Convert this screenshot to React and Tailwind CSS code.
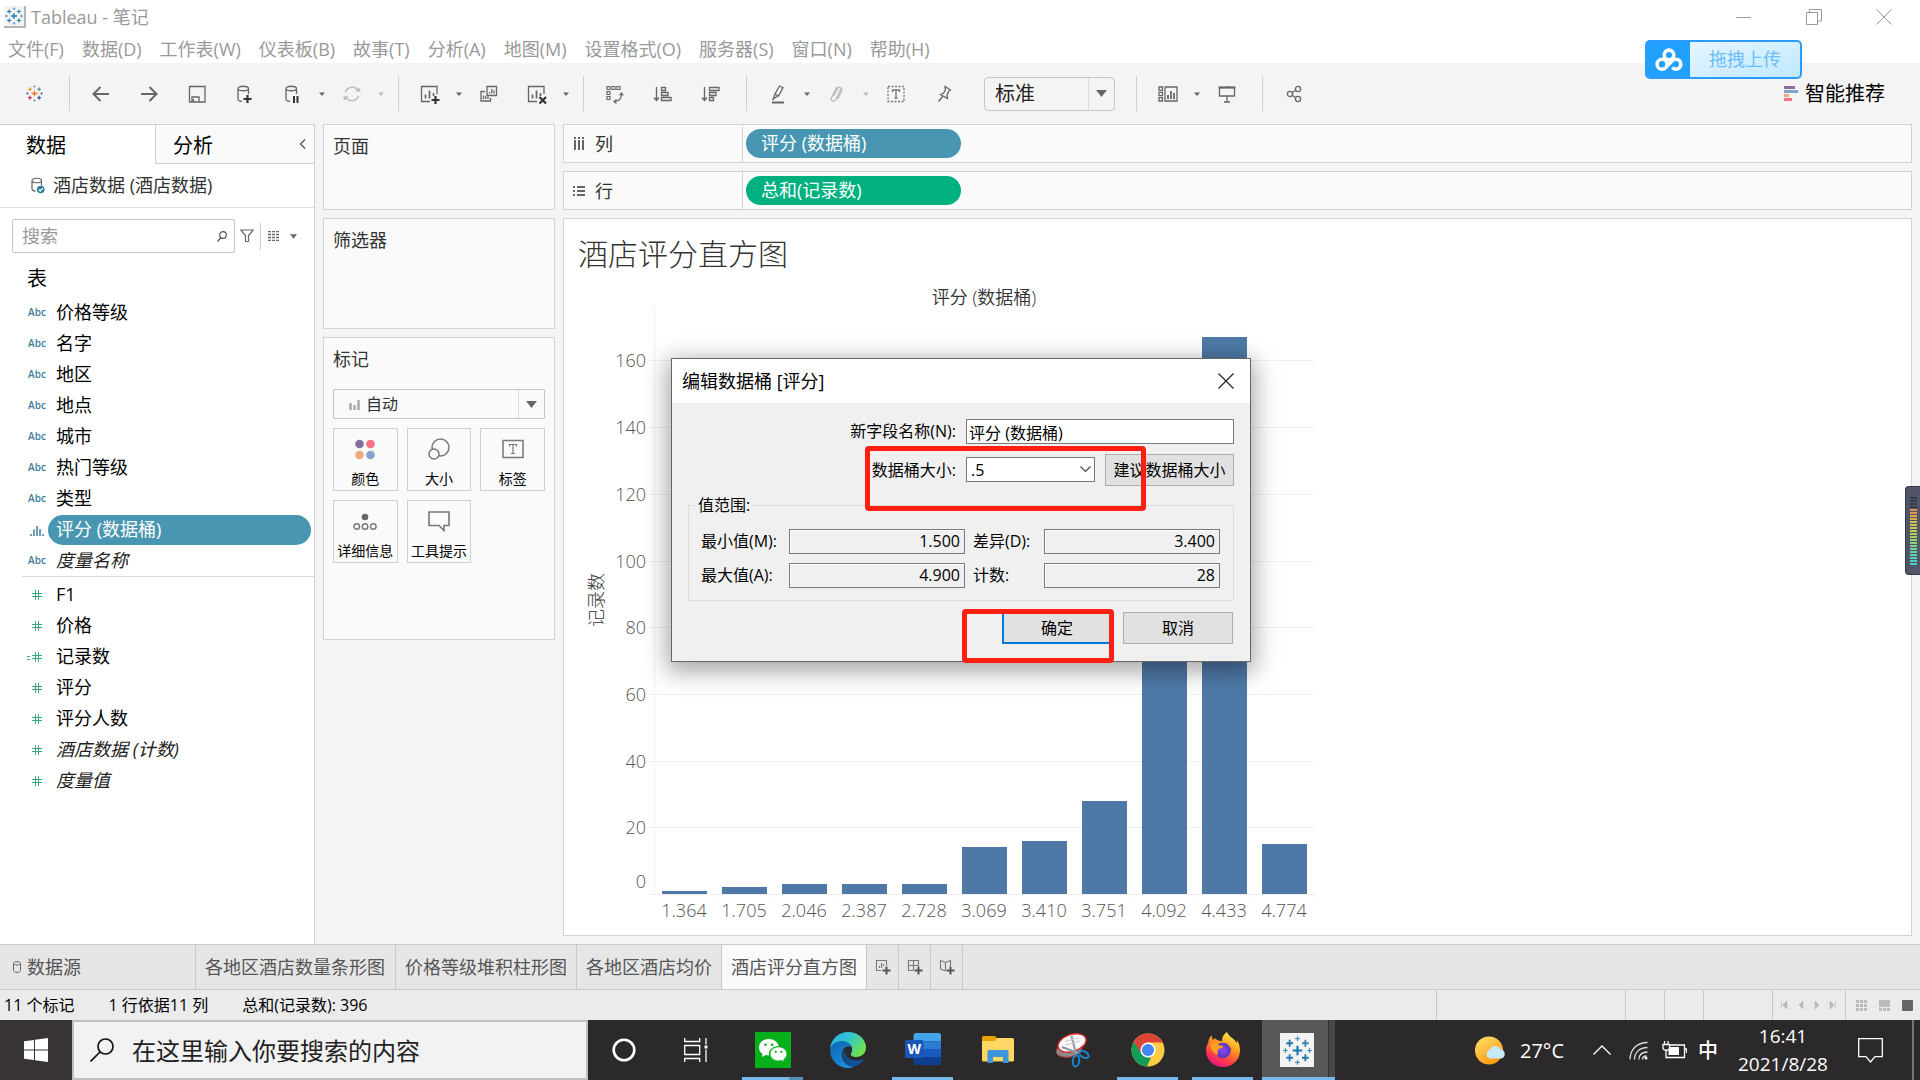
import React from "react";

const Plus = ({ x, y, r, c, w }) => (
  <path d={`M${x - r} ${y}H${x + r}M${x} ${y - r}V${y + r}`} stroke={c} strokeWidth={w} />
);

const BRAND = ["#e8762c", "#eb9129", "#5b879b", "#c72037", "#1f457e", "#7199a6", "#5c6692"];
const BLUE = ["#1f77b0", "#1f77b0", "#3d86b5", "#1f77b0", "#1f77b0", "#4c8fbb", "#4c8fbb"];

function TableauMark({ size = 18, c = BRAND }) {
  return (
    <svg width={size} height={size} viewBox="0 0 24 24" fill="none">
      <Plus x={12} y={12} r={4} c={c[0]} w={1.8} />
      <Plus x={5.5} y={6} r={2.8} c={c[1]} w={1.5} />
      <Plus x={18.5} y={6} r={2.8} c={c[2]} w={1.5} />
      <Plus x={5.5} y={18} r={2.8} c={c[3]} w={1.5} />
      <Plus x={18.5} y={18} r={2.8} c={c[4]} w={1.5} />
      <Plus x={12} y={2.2} r={2} c={c[5]} w={1} />
      <Plus x={12} y={21.8} r={2} c={c[5]} w={1} />
      <Plus x={2} y={12} r={2} c={c[6]} w={1} />
      <Plus x={22} y={12} r={2} c={c[6]} w={1} />
    </svg>
  );
}

const Ico = ({ children, c = "#666", w = 1.3 }) => (
  <svg width="20" height="20" viewBox="0 0 20 20" fill="none" stroke={c} strokeWidth={w}>
    {children}
  </svg>
);

const Tool = ({ label, children }) => (
  <button type="button" aria-label={label} className="mx-[14px] flex h-8 w-5 shrink-0 items-center justify-center">
    {children}
  </button>
);

const Caret = ({ label, c = "#666" }) => (
  <button type="button" aria-label={label} className="mr-0.5 flex h-8 w-[9px] shrink-0 items-center justify-center">
    <svg width="6" height="4" viewBox="0 0 6 4"><path d="M0 .5h6L3 4z" fill={c} /></svg>
  </button>
);

const Sep = () => <div className="mr-[7px] ml-[11px] h-[35px] w-px shrink-0 bg-[#cfcfcf]" />;

const DownTriangle = ({ w = 11 }) => (
  <svg width={w} height="7" viewBox="0 0 11 7"><path d="M0 0h11L5.500 7z" fill="#666" /></svg>
);

const MENU = ["文件(F)", "数据(D)", "工作表(W)", "仪表板(B)", "故事(T)", "分析(A)", "地图(M)", "设置格式(O)", "服务器(S)", "窗口(N)", "帮助(H)"];

function TitleBar() {
  return (
    <header className="bg-white text-[18px] text-[#999]">
      <div className="flex h-[34px] items-center">
        <div className="ml-1 flex h-[22px] w-[22px] items-center justify-center border-r-2 border-b-2 border-[#b5b5b5] bg-[#f3f3f3]">
          <TableauMark size={18} c={BLUE} />
        </div>
        <span className="ml-[5px] leading-[26px]">Tableau - 笔记</span>
        <div className="mr-px ml-auto flex">
          <button type="button" aria-label="最小化" className="flex h-[34px] w-[70px] items-center justify-center">
            <svg width="16" height="16"><path d="M0 8.500h15" stroke="#999" /></svg>
          </button>
          <button type="button" aria-label="还原" className="flex h-[34px] w-[70px] items-center justify-center">
            <svg width="16" height="16" fill="none" stroke="#999"><path d="M.5 3.500h11v12H.5zM3.500 3V.5h12v11.500H12" /></svg>
          </button>
          <button type="button" aria-label="关闭" className="flex h-[34px] w-[70px] items-center justify-center">
            <svg width="16" height="16" stroke="#999"><path d="M.5.5l15 15M15.500.5l-15 15" /></svg>
          </button>
        </div>
      </div>
      <nav className="flex h-[29px] items-center gap-[18px] pl-2">
        {MENU.map((m) => (
          <button type="button" key={m} className="leading-[28px] whitespace-nowrap">{m}</button>
        ))}
      </nav>
    </header>
  );
}

const cylinder = "M3 4.500c0-3 10.500-3 10.500 0s-10.500 3-10.500 0v10.500c0 1.500 1.500 2.200 4 2.400M13.500 4.500v5.500";

function Toolbar() {
  return (
    <div className="relative flex h-[61px] items-center pl-[10px]">
      <Tool label="Tableau 起始页"><TableauMark size={17} /></Tool>
      <Sep />
      <Tool label="撤消"><Ico w={2}><path d="M18 10H3M9.500 3L2.500 10l7 7" /></Ico></Tool>
      <Tool label="恢复"><Ico w={2}><path d="M2 10h15M10.500 3l7 7-7 7" /></Ico></Tool>
      <Tool label="保存"><Ico><path d="M2.500 2.500h15.500v15.500h-15.500zM5 18v-5h7v5M6.500 15v3" /></Ico></Tool>
      <Tool label="新建数据源"><Ico><path d={cylinder} /><path d="M12.500 11v8M8.500 15h8" stroke="#333" strokeWidth="2.200" /></Ico></Tool>
      <Tool label="暂停自动更新"><Ico><path d={cylinder} /><path d="M11 12v7M14.500 12v7" stroke="#333" strokeWidth="2" /></Ico></Tool>
      <Caret label="暂停选项" />
      <Tool label="刷新">
        <Ico c="#bbb" w={1.5}>
          <path d="M3.500 8a7 7 0 0 1 13-.5M16.500 12a7 7 0 0 1-13 .5" />
          <path d="M13.500 7.500h5.500l-2-4zM1 12.500h5.500l-4 4z" fill="#bbb" stroke="none" />
        </Ico>
      </Tool>
      <Caret label="刷新选项" c="#bbb" />
      <Sep />
      <Tool label="新建工作表">
        <Ico><path d="M10 17.500H1.500v-15h15.500V10" /><path d="M5.500 14.500v-4M9.500 14.500v-8M13.500 12V9" strokeWidth="1.700" /><path d="M15.500 12v8M11.500 16h8" stroke="#333" strokeWidth="2.200" /></Ico>
      </Tool>
      <Caret label="新建选项" />
      <Tool label="复制">
        <Ico><path d="M8 2.500h9.500v9H8zM6 7.500H2v9.500h9.500v-3" /><path d="M10.500 9.500V8M12.800 9.500V5M15 9.500V6.500M4.500 15v-3.500M6.800 15v-3M9 15v-2.500" /></Ico>
      </Tool>
      <Tool label="清除工作表">
        <Ico><path d="M10 17.500H1.500v-15h15.500V10" /><path d="M5.500 14.500v-4M9.500 14.500v-8M13.500 12V9" strokeWidth="1.700" /><path d="M12.500 13l6.500 6.500M19 13l-6.500 6.500" stroke="#333" strokeWidth="2.200" /></Ico>
      </Tool>
      <Caret label="清除选项" />
      <Sep />
      <Tool label="交换行和列">
        <Ico w={1.2}><path d="M2 2.500h3v3H2zM7 2.500h3v3H7zM12 2.500h3v3h-3zM2 7.500h3v3H2zM2 12.500h3v3H2z" /><path d="M16.500 10c0 4-2 7-7 7.500M14.500 11.500l2-2.500 2 2.500M11.500 15.500L9 17.500l2.500 2" /></Ico>
      </Tool>
      <Tool label="升序排序">
        <Ico><path d="M3.500 3v13M1 13.500l2.500 3 2.500-3M8.500 3.500h4v3h-4zM8.500 8.500h6.500v3h-6.500zM8.500 13.500h9.500v3h-9.500z" /></Ico>
      </Tool>
      <Tool label="降序排序">
        <Ico><path d="M3.500 3v13M1 13.500l2.500 3 2.500-3M8.500 3.500h9.500v3h-9.500zM8.500 8.500h6.500v3h-6.500zM8.500 13.500h4v3h-4z" /></Ico>
      </Tool>
      <Sep />
      <Tool label="突出显示">
        <Ico><path d="M11.500 2l3.500 1.500-4.500 8.500-3.500-2zM7 10l-1.500 4.500L10.500 12M6 14l-1.500 2" /><path d="M4 18.500h12" strokeWidth="2" /></Ico>
      </Tool>
      <Caret label="突出显示选项" />
      <Tool label="组成员">
        <Ico c="#bbb"><path d="M6.500 12l4-7.500c1-2 4-1 3.200 1.200l-5 9.800c-1.500 3-5.500 1.500-4.200-1.700l4.500-9c1.500-3 7-1.500 5.500 2.500l-4 8" /></Ico>
      </Tool>
      <Caret label="组选项" c="#bbb" />
      <Tool label="显示标记标签">
        <Ico c="#777"><path d="M2 2.500h16v15H2z" strokeDasharray="2 1.500" /><path d="M6.500 8V6h7v2M10 6v8M8.500 14h3" /></Ico>
      </Tool>
      <Tool label="固定轴">
        <Ico><path d="M11 2.500l5.500 3.500-2 1.500-1.500 4 .5 3-7-4 3-1.200 2-3.800zM8.500 12.500l-4 5" /></Ico>
      </Tool>
      <div className="relative ml-4 flex h-[34px] w-[131px] shrink-0 items-center rounded-sm border border-[#c8c8c8]">
        <select aria-label="适合" className="h-full w-full appearance-none bg-transparent pl-[10px] text-[20px] text-[#222]" defaultValue="标准">
          <option>标准</option>
        </select>
        <span className="pointer-events-none absolute inset-y-0 right-0 flex w-[26px] items-center justify-center border-l border-[#ddd]"><DownTriangle /></span>
      </div>
      <div className="w-[10px] shrink-0" />
      <Sep />
      <Tool label="显示/隐藏卡">
        <Ico><path d="M1 3h3.500v3.300H1zM1 8.300h3.500v3.300H1zM1 13.700h3.500v3.300H1zM7 3h12v14H7z" /><path d="M10 15v-4M13 15V7M16 15V9" strokeWidth="1.800" /></Ico>
      </Tool>
      <Caret label="卡选项" />
      <Tool label="演示模式">
        <Ico><path d="M2.500 3.500h15v8.500h-15z" /><path d="M1.500 3.500h17" strokeWidth="2" /><path d="M10 2v2M10 12v6M7 18h6" /></Ico>
      </Tool>
      <Sep />
      <Tool label="共享">
        <Ico><circle cx="6" cy="10" r="2.600" /><circle cx="14" cy="5" r="2.600" /><circle cx="14" cy="15" r="2.600" /><path d="M8.200 8.700l3.600-2.400M8.200 11.300l3.600 2.400" /></Ico>
      </Tool>
      <button type="button" className="mr-[35px] ml-auto flex items-center gap-[7px] text-[20px] leading-[28px] text-black">
        <svg width="14" height="16">
          <path fill="#8b6f9b" d="M0 0h11v3H0z" /><path fill="#84a4cd" d="M0 4h14v3H0z" /><path fill="#f3a77e" d="M0 8h5v3H0z" /><path fill="#fb6f83" d="M0 12h8v3H0z" />
        </svg>
        智能推荐
      </button>
    </div>
  );
}

const Abc = () => <span className="text-[10px] font-semibold text-[#3a7e9c]">Abc</span>;
const Hash = () => (
  <svg width="10" height="10" stroke="#3aa67c"><path d="M3.500 0v10M6.500 0v10M0 3.500h10M0 6.500h10" /></svg>
);
const CalcHash = () => (
  <svg width="16" height="10" className="-ml-1.5" stroke="#3aa67c"><path d="M9.500 0v10M12.500 0v10M6 3.500h10M6 6.500h10M1 4.500h3M1 7.500h3" /></svg>
);
const Bins = () => (
  <svg width="14" height="12" stroke="#3a7e9c" strokeWidth="1.500"><path d="M1 12v-2M4 12V5.500M7 12V2M10 12V5M13 12v-2" /></svg>
);

function Field({ icon, text, italic }) {
  return (
    <li className="flex h-[31px] items-center">
      <span className="ml-[26px] flex w-[22px] shrink-0 justify-center">{icon}</span>
      <button type="button" className={italic ? "pl-2 text-[#222] italic" : "pl-2"}>{text}</button>
    </li>
  );
}

function DataPane() {
  return (
    <aside className="flex w-[315px] shrink-0 flex-col border-t border-r border-[#cfcfcf] bg-white text-[18px] text-black">
      <div className="flex h-[39px] text-[20px]">
        <button type="button" className="w-[155px] shrink-0 pt-0.5 pl-[26px] text-left">数据</button>
        <div className="flex flex-1 items-center justify-between border-b border-l border-[#cfcfcf] bg-[#fafafa] pr-2">
          <button type="button" className="pt-0.5 pl-[17px]">分析</button>
          <button type="button" aria-label="折叠">
            <svg width="7" height="10" fill="none" stroke="#555" strokeWidth="1.300"><path d="M6 .5L1.500 5 6 9.500" /></svg>
          </button>
        </div>
      </div>
      <button type="button" className="flex h-[44px] items-center gap-2 border-b border-[#e0e0e0] pl-[31px] text-[#333]">
        <svg width="14" height="17" viewBox="0 0 14 17" fill="none" stroke="#666" strokeWidth="1.200">
          <path d="M1 3.500c0-3 9.500-3 9.500 0s-9.500 3-9.500 0V12c0 1.500 1.500 2 3.500 2.200M10.500 3.500v5" />
          <circle cx="9.700" cy="12.500" r="3.800" fill="#2f7d9b" stroke="none" /><path d="M7.900 12.500l1.400 1.500 2.400-2.800" stroke="#fff" />
        </svg>
        <span>酒店数据 (酒店数据)</span>
      </button>
      <div className="mt-[11px] flex h-[34px] items-center pl-3">
        <label className="flex h-full w-[223px] shrink-0 items-center rounded-xs border border-[#c4c4c4] pr-[7px] pl-[9px]">
          <input aria-label="搜索" placeholder="搜索" className="min-w-0 flex-1 text-[18px] placeholder-[#999] outline-none" />
          <svg width="10" height="11" fill="none" stroke="#555" strokeWidth="1.200"><circle cx="6" cy="4" r="3.300" /><path d="M4 6.500L.5 10.500" /></svg>
        </label>
        <button type="button" aria-label="筛选" className="ml-[5px]">
          <svg width="14" height="14" fill="none" stroke="#666" strokeWidth="1.200"><path d="M.8 1h12.400L8.500 6.500v6H5.500v-6z" /></svg>
        </button>
        <div className="ml-[6px] h-[27px] w-px bg-[#ccc]" />
        <button type="button" aria-label="查看方式" className="ml-[7px] flex items-center gap-[10px]">
          <svg width="12" height="10" stroke="#666" strokeWidth="1.300"><path strokeDasharray="3 1" d="M0 .5h12M0 3.500h12M0 6.500h12M0 9.500h12" /></svg>
          <DownTriangle w={7} />
        </button>
      </div>
      <h2 className="h-[44px] pt-[11px] pl-[27px] text-[20px] leading-[30px]">表</h2>
      <ul>
        {["价格等级", "名字", "地区", "地点", "城市", "热门等级", "类型"].map((t) => <Field key={t} icon={<Abc />} text={t} />)}
        <li className="flex h-[31px] items-center">
          <span className="ml-[26px] flex w-[22px] shrink-0 justify-center"><Bins /></span>
          <button type="button" className="mr-[3px] h-[30px] flex-1 rounded-full bg-[#4996b2] pl-2 text-left text-white">评分 (数据桶)</button>
        </li>
        <Field icon={<Abc />} text="度量名称" italic />
      </ul>
      <ul className="ml-[22px] border-t border-[#dcdcdc] pt-0.5">
        <li className="-ml-[22px]">
          <ul>
            <Field icon={<Hash />} text="F1" />
            <Field icon={<Hash />} text="价格" />
            <Field icon={<CalcHash />} text="记录数" />
            <Field icon={<Hash />} text="评分" />
            <Field icon={<Hash />} text="评分人数" />
            <Field icon={<Hash />} text="酒店数据 (计数)" italic />
            <Field icon={<Hash />} text="度量值" italic />
          </ul>
        </li>
      </ul>
    </aside>
  );
}

const Mark = ({ label, children }) => (
  <button type="button" className="flex h-[63px] flex-col items-center justify-between border border-[#d0d0d0] pt-[9px] pb-px text-[14px] leading-5 whitespace-nowrap text-black">
    {children}
    <span>{label}</span>
  </button>
);

function Cards() {
  return (
    <div className="ml-2 flex w-[232px] shrink-0 flex-col gap-2 text-[18px] text-[#333]">
      <section className="h-[86px] border border-[#d3d3d3] bg-[#fafafa] px-[9px] pt-2"><h3>页面</h3></section>
      <section className="h-[111px] border border-[#d3d3d3] bg-[#fafafa] px-[9px] pt-2"><h3>筛选器</h3></section>
      <section className="h-[303px] border border-[#d3d3d3] bg-[#fafafa] px-[9px] pt-2">
        <h3>标记</h3>
        <div className="relative mt-4 flex h-[30px] items-center rounded-xs border border-[#c4c4c4]">
          <svg width="11" height="11" className="ml-[15px] shrink-0" stroke="#aaa" strokeWidth="2.500"><path d="M1.500 11V4M5.500 11V6M9.500 11V1" /></svg>
          <select aria-label="标记类型" className="h-full flex-1 appearance-none bg-transparent pl-[6px] text-[16px]" defaultValue="自动">
            <option>自动</option>
          </select>
          <span className="pointer-events-none absolute inset-y-0 right-0 flex w-[26px] items-center justify-center border-l border-[#ddd]"><DownTriangle /></span>
        </div>
        <div className="mt-[9px] grid grid-cols-3 gap-x-[9px] gap-y-[9px]">
          <Mark label="颜色">
            <svg width="20" height="22"><circle cx="4.500" cy="6" r="4.300" fill="#85709c" /><circle cx="15.500" cy="6" r="4.300" fill="#fb6f83" /><circle cx="4.500" cy="17" r="4.300" fill="#f3a77e" /><circle cx="15.500" cy="17" r="4.300" fill="#84a4cd" /></svg>
          </Mark>
          <Mark label="大小">
            <svg width="22" height="22" fill="none" stroke="#777" strokeWidth="1.500"><circle cx="12.500" cy="9.500" r="8.500" /><circle cx="6" cy="16" r="5" fill="#fafafa" /></svg>
          </Mark>
          <Mark label="标签">
            <svg width="22" height="22" fill="none" stroke="#777" strokeWidth="1.500"><path d="M1 2.500h20v17H1z" /><path d="M7.500 8.500V6.500h7v2M11 6.500v9M9 15.500h4" strokeWidth="1.200" /></svg>
          </Mark>
          <Mark label="详细信息">
            <svg width="24" height="22" fill="none" stroke="#777" strokeWidth="1.400"><circle cx="12" cy="7" r="3.300" fill="#666" stroke="none" /><circle cx="3.700" cy="16.500" r="2.800" /><circle cx="12" cy="16.500" r="2.800" /><circle cx="20.300" cy="16.500" r="2.800" /></svg>
          </Mark>
          <Mark label="工具提示">
            <svg width="22" height="22" fill="none" stroke="#777" strokeWidth="1.600"><path d="M1 2h20v13.500h-5v5l-5-5H1z" /></svg>
          </Mark>
        </div>
      </section>
    </div>
  );
}

function Shelf({ name, icon, children }) {
  return (
    <div className="flex h-[39px] shrink-0 items-stretch border border-[#d3d3d3] bg-[#fafafa]">
      <div className="flex w-[179px] items-center gap-[10px] border-r border-[#d3d3d3] pl-[9px] text-[18px] text-[#333]">
        {icon}
        <span className="pt-0.5">{name}</span>
      </div>
      {children}
    </div>
  );
}

const BARS = [["1.364", 1], ["1.705", 2], ["2.046", 3], ["2.387", 3], ["2.728", 3], ["3.069", 14], ["3.410", 16], ["3.751", 28], ["4.092", 144], ["4.433", 167], ["4.774", 15]];

function Histogram() {
  const base = 614;
  const unit = 3.335;
  return (
    <svg width="760" height="646" className="block" fontSize="18" fontWeight="300" fill="#555">
      <text x="420" y="24" textAnchor="middle" fontWeight="350" fill="#333">评分 (数据桶)</text>
      <text x="32" y="320" textAnchor="middle" dominantBaseline="central" transform="rotate(-90 32 320)" fill="#333">记录数</text>
      {[20, 40, 60, 80, 100, 120, 140, 160].map((v) => (
        <g key={v}>
          <path d={`M85 ${Math.round(base - v * unit) + 0.5}H750`} stroke="#efefef" />
          <text x="82" y={Math.round(base - v * unit) + 7} textAnchor="end">{v}</text>
        </g>
      ))}
      <text x="82" y={base - 6} textAnchor="end">0</text>
      <path d={`M85 ${base + 0.5}H750M90.500 26V${base}`} stroke="#efefef" />
      {BARS.map(([name, v], i) => (
        <g key={name}>
          <rect x={98 + i * 60} y={Math.round(base - v * unit)} width="45" height={Math.round(v * unit)} fill="#4e79a7" />
          <path d={`M${150.5 + i * 60} ${base}v4`} stroke="#efefef" />
          <text x={120 + i * 60} y={base + 23} textAnchor="middle">{name}</text>
        </g>
      ))}
    </svg>
  );
}

const stat = "h-[25px] w-[176px] border border-[#7a7a7a] bg-[#f0f0f0] pr-1 text-right shadow-[inset_1px_1px_0_#fff]";

function BinDialog() {
  return (
    <div role="dialog" aria-label="编辑数据桶" className="absolute top-[139px] left-[107px] w-[580px] border border-[#666] bg-[#f0f0f0] text-[16px] leading-[25px] text-black shadow-[0_6px_22px_4px_rgba(0,0,0,0.34)]">
      <div className="flex h-[44px] items-center justify-between bg-white pr-4 pl-[10px] text-[18px]">
        <h2>编辑数据桶 [评分]</h2>
        <button type="button" aria-label="关闭对话框">
          <svg width="16" height="16" stroke="#222" strokeWidth="1.200"><path d="M.5.5l15 15M15.500.5l-15 15" /></svg>
        </button>
      </div>
      <div className="px-4 pt-4 pb-[17px]">
        <div className="flex h-[25px] items-center justify-end gap-[10px]">
          <label htmlFor="bin-name">新字段名称(N):</label>
          <input id="bin-name" defaultValue="评分 (数据桶)" className="h-full w-[268px] border border-[#7a7a7a] bg-white pl-0.5" />
        </div>
        <div className="mt-[10px] flex h-[32px] items-center justify-end gap-[10px]">
          <label htmlFor="bin-size">数据桶大小:</label>
          <div className="relative mb-0.5 h-[25px] w-[129px]">
            <select id="bin-size" className="h-full w-full appearance-none border border-[#7a7a7a] bg-white pl-1" defaultValue=".5"><option>.5</option></select>
            <svg width="11" height="7" fill="none" stroke="#444" strokeWidth="1.200" className="pointer-events-none absolute top-[9px] right-1"><path d="M.5.5l5 5 5-5" /></svg>
          </div>
          <button type="button" className="h-[32px] w-[129px] border border-[#adadad] bg-[#e1e1e1] whitespace-nowrap">建议数据桶大小</button>
        </div>
        <fieldset className="mt-[7px] border border-[#dcdcdc] px-3 pt-3 pb-3">
          <legend className="-ml-[5px] px-0.5 leading-6">值范围:</legend>
          <div className="grid grid-cols-[88px_176px_79px_176px] items-center gap-y-[9px]">
            <label htmlFor="s-min">最小值(M):</label>
            <input id="s-min" readOnly value="1.500" className={stat} />
            <label htmlFor="s-diff" className="pl-2">差异(D):</label>
            <input id="s-diff" readOnly value="3.400" className={stat} />
            <label htmlFor="s-max">最大值(A):</label>
            <input id="s-max" readOnly value="4.900" className={stat} />
            <label htmlFor="s-count" className="pl-2">计数:</label>
            <input id="s-count" readOnly value="28" className={stat} />
          </div>
        </fieldset>
        <div className="mt-[11px] flex justify-end gap-[11px] pr-px">
          <button type="button" className="h-[32px] w-[110px] border-2 border-[#0078d7] bg-[#e1e1e1]">确定</button>
          <button type="button" className="h-[32px] w-[110px] border border-[#adadad] bg-[#e1e1e1]">取消</button>
        </div>
      </div>
      <div className="pointer-events-none absolute top-[87px] left-[193px] h-[65px] w-[281px] rounded-[4px] border-5 border-[#ff1f12]" />
      <div className="pointer-events-none absolute top-[250px] left-[290px] h-[54px] w-[152px] rounded-[4px] border-5 border-[#ff1f12]" />
    </div>
  );
}

function Workspace() {
  return (
    <div className="mr-2 ml-2 flex min-w-0 flex-1 flex-col gap-2">
      <Shelf name="列" icon={<svg width="12" height="14" stroke="#666" strokeWidth="2"><path d="M2 0v2M2 3v10M6 0v2M6 3v10M10 0v2M10 3v10" /></svg>}>
        <button type="button" className="my-auto ml-[3px] h-[29px] w-[215px] rounded-full bg-[#4996b2] pl-[15px] text-left text-[18px] text-white">评分 (数据桶)</button>
      </Shelf>
      <Shelf name="行" icon={<svg width="12" height="12" stroke="#666" strokeWidth="2"><path d="M0 2h2M4 2h8M0 6h2M4 6h8M0 10h2M4 10h8" /></svg>}>
        <button type="button" className="my-auto ml-[3px] h-[29px] w-[215px] rounded-full bg-[#00b180] pl-[15px] text-left text-[18px] text-white">总和(记录数)</button>
      </Shelf>
      <div className="relative flex-1 border border-[#d3d3d3] bg-white">
        <h1 className="mt-[13px] mb-1 pl-[14px] text-[30px] leading-[44px] font-light text-[#333]">酒店评分直方图</h1>
        <Histogram />
        <BinDialog />
      </div>
    </div>
  );
}

const AddBtn = ({ label, children }) => (
  <button type="button" aria-label={label} className="flex w-8 items-center justify-center border-r border-[#c8c8c8]">
    <svg width="16" height="16" fill="none" stroke="#777" strokeWidth="1.100">{children}<path d="M11.500 7.500v8M7.500 11.500h8" stroke="#555" strokeWidth="2" /></svg>
  </button>
);

function SheetTabs() {
  const tab = "border-r border-[#c8c8c8] px-[9px] whitespace-nowrap";
  return (
    <div className="flex h-[46px] shrink-0 items-stretch border-t border-b border-[#cbcbcb] bg-[#e6e6e6] text-[18px] text-[#555]">
      <button type="button" className="flex w-[196px] items-center gap-[6px] border-r border-[#c8c8c8] pl-[13px]">
        <svg width="8" height="12" fill="none" stroke="#666"><path d="M.5 2.500c0-2.500 7-2.500 7 0v7c0 2.500-7 2.500-7 0zc0 2 7 2 7 0" /></svg>
        数据源
      </button>
      <button type="button" className="border-r border-[#c8c8c8] pr-[10px] pl-[9px] whitespace-nowrap">各地区酒店数量条形图</button>
      <button type="button" className={tab}>价格等级堆积柱形图</button>
      <button type="button" className={tab}>各地区酒店均价</button>
      <button type="button" className="border-r border-[#c8c8c8] bg-[#fafafa] px-[9px] whitespace-nowrap">酒店评分直方图</button>
      <AddBtn label="新建工作表"><path d="M6 11.500H1.500v-10h10v5M4.500 9V7M6.500 9V4M8.500 7V5" /></AddBtn>
      <AddBtn label="新建仪表板"><path d="M6 11.500H1.500v-10h10v5M6.500 1.500v10M1.500 6.500h10" /></AddBtn>
      <AddBtn label="新建故事"><path d="M6.500 12L1.500 10V1.500l5 2 5-2V7M6.500 3.500V12" /></AddBtn>
    </div>
  );
}

function StatusBar() {
  const cell = "h-full border-l border-[#c8c8c8]";
  return (
    <div className="flex h-[30px] shrink-0 items-center bg-[#ebebeb] text-[16px] text-black">
      <div className="flex gap-[34px] pl-1 whitespace-nowrap">
        <span>11 个标记</span><span>1 行依据11 列</span><span>总和(记录数): 396</span>
      </div>
      <div className="ml-auto flex h-full">
        <div className={cell + " w-[189px]"} />
        <div className={cell + " w-[39px]"} />
        <div className={cell + " w-[39px]"} />
        <div className={cell + " w-[69px]"} />
        <div className="flex h-full w-[73px] items-center justify-around border-l border-[#c8c8c8] px-1">
          {["M.5 0v8M6 0v8L1.500 4z", "M6 0v8L2 4z", "M2 0v8l4-4z", "M6.500 0v8M1 0v8l4.500-4z"].map((d, i) => (
            <button type="button" key={d} aria-label={["第一页", "上一页", "下一页", "最后一页"][i]}>
              <svg width="8" height="8" fill="#bbb" stroke="#bbb" strokeWidth=".6"><path d={d} /></svg>
            </button>
          ))}
        </div>
        <div className="flex h-full w-[75px] items-center gap-3 border-l border-[#c8c8c8] pl-[10px]">
          <button type="button" aria-label="工作表排序程序">
            <svg width="11" height="11" fill="#bbb"><path d="M0 0h3v3H0zM4 0h3v3H4zM8 0h3v3H8zM0 4h3v3H0zM4 4h3v3H4zM8 4h3v3H8zM0 8h3v3H0zM4 8h3v3H4zM8 8h3v3H8z" /></svg>
          </button>
          <button type="button" aria-label="胶片视图">
            <svg width="11" height="11" fill="#bbb"><path d="M0 0h11v7H0zM0 8h3v3H0zM4 8h3v3H4zM8 8h3v3H8z" /></svg>
          </button>
          <button type="button" aria-label="标签视图" className="h-[11px] w-[11px] rounded-[1px] bg-[#666]" />
        </div>
      </div>
    </div>
  );
}

function TaskItem({ label, line, children }) {
  return (
    <button type="button" aria-label={label} className="relative flex w-[75px] items-center justify-center">
      {children}
      {line && <span className="absolute bottom-0 left-[7px] h-[3px] w-[61px] bg-[#76b9ed]" />}
      {line === 2 && <span className="absolute right-[7px] bottom-0 h-[3px] w-[14px] bg-[#5a8fb8]" />}
    </button>
  );
}

const WeChat = () => (
  <svg width="36" height="36" viewBox="0 0 36 36">
    <path fill="#07b01a" d="M0 0h36v36H0z" />
    <path fill="#fff" d="M14 7C8 7 4 10.800 4 15.400c0 2.700 1.400 5 3.700 6.500L6.800 25l3.600-1.900c1.200.3 2.400.5 3.600.5C13 18 18 14 23.800 14.300 22.800 10 18.800 7 14 7z" />
    <path fill="#fff" stroke="#07b01a" d="M23.500 14.800c-4.800 0-8.500 3.200-8.500 7.100s3.700 7.100 8.500 7.100c1 0 2-.1 2.900-.4l3.100 1.700-.8-2.700c2-1.300 3.300-3.300 3.300-5.700 0-3.900-3.700-7.100-8.500-7.100z" />
    <g fill="#07b01a"><circle cx="10.500" cy="12.800" r="1.300" /><circle cx="17.200" cy="12.800" r="1.300" /><circle cx="20.800" cy="19.800" r="1.100" /><circle cx="26.300" cy="19.800" r="1.100" /></g>
  </svg>
);

const Edge = () => (
  <svg width="36" height="36" viewBox="0 0 36 36">
    <defs>
      <linearGradient id="eg1" x1="0" y1="0" x2="1" y2=".5"><stop offset="0" stopColor="#2aa5e0" /><stop offset=".5" stopColor="#2fc4d4" /><stop offset="1" stopColor="#6ce150" /></linearGradient>
      <linearGradient id="eg2" x1="0" y1="0" x2=".6" y2="1"><stop offset="0" stopColor="#0c63ae" /><stop offset="1" stopColor="#1a8fe0" /></linearGradient>
      <linearGradient id="eg3" x1="0" y1="0" x2="1" y2="0"><stop offset="0" stopColor="#114a8b" /><stop offset="1" stopColor="#0c59a4" /></linearGradient>
    </defs>
    <path fill="url(#eg1)" d="M0 18C0 8 8 0 18 0c10.500 0 18 7.500 18 15.500 0 6-4.500 9.500-9.500 9.500-4 0-5.800-1.500-5.800-2.700 0-1 1.500-1.800 1.500-4.500C22.200 13 18 9.500 12 9.500 5.500 9.500 1 13.500 0 18z" />
    <path fill="url(#eg2)" d="M0 18c.8-5 5.500-8.700 11.500-8.700 5 0 9 2 10.300 5.700-4.500-2.300-10 1.500-10 7.500 0 6.500 5 12 12.700 12.200C22.500 35.600 20.300 36 18 36 8 36 0 28 0 18z" />
    <path fill="url(#eg3)" d="M14.500 17c-4 5.500-1.500 15.500 8.500 18 4-.8 8-3.700 10.400-7.300.5-.8-.2-1.200-.8-.8-5 2.500-12 2-15.500-2-2-2.300-2.800-5.200-2.600-7.900z" />
  </svg>
);

const Word = () => (
  <svg width="36" height="34" viewBox="0 0 36 34">
    <path fill="#41a5ee" d="M10 0h24a2 2 0 0 1 2 2v6.500H8.500V2z" /><path fill="#2b7cd3" d="M8.500 8.500H36V16H8.500z" /><path fill="#185abd" d="M8.500 16H36v8H8.500z" /><path fill="#103f91" d="M8.500 24H36v6a2 2 0 0 1-2 2H10.500a2 2 0 0 1-2-2z" />
    <rect x="0" y="7" width="18.500" height="18" rx="1.500" fill="#1b57b8" />
    <text x="9.300" y="21" textAnchor="middle" fontSize="14" fontWeight="700" fill="#fff">W</text>
  </svg>
);

const Explorer = () => (
  <svg width="32" height="28" viewBox="0 0 32 28">
    <path fill="#e8a200" d="M0 1.500A1.500 1.500 0 0 1 1.500 0H13l2 2.500V6H0z" /><path fill="#fdd663" d="M0 5h13l2-3h15.500A1.500 1.500 0 0 1 32 3.500V24a1.500 1.500 0 0 1-1.500 1.500h-29A1.500 1.500 0 0 1 0 24z" />
    <path fill="#3b96dd" d="M5.500 15.500a1.500 1.500 0 0 1 1.500-1.500h18a1.500 1.500 0 0 1 1.500 1.500V27H21v-6H11v6H5.500z" />
  </svg>
);

const Snip = () => (
  <svg width="34" height="36" viewBox="0 0 34 36" fill="none">
    <ellipse cx="13" cy="18" rx="13" ry="7" fill="#8b8b8b" stroke="#b03a35" transform="rotate(-10 13 18)" />
    <ellipse cx="16" cy="11" rx="14.500" ry="8.500" fill="#f7f7f7" stroke="#d9292b" strokeWidth="1.400" transform="rotate(-18 16 11)" />
    <path d="M15.500 4L20 22M6 15l16 6" stroke="#8d9aa5" strokeWidth="2" />
    <path d="M9 9.500l14-4M9 13l15-4" stroke="#c9ced2" strokeWidth="1" />
    <ellipse cx="28" cy="22.500" rx="5" ry="3" stroke="#1b86cc" strokeWidth="2" transform="rotate(30 28 22.500)" /><ellipse cx="20" cy="29" rx="3.200" ry="5.500" stroke="#1b86cc" strokeWidth="2" transform="rotate(8 20 29)" />
  </svg>
);

const Chrome = () => (
  <svg width="34" height="34" viewBox="0 0 34 34">
    <circle cx="17" cy="17" r="16.500" fill="#fc4" />
    <path fill="#db4437" d="M2.700 8.800A16.500 16.500 0 0 1 31.300 8.800L31.500 9.500H17L9.600 20.500z" />
    <path fill="#0f9d58" d="M2.700 8.800L10.500 21l6.500 3.500h3L16 33.500A16.500 16.500 0 0 1 2.700 8.800z" />
    <circle cx="17" cy="17" r="7.600" fill="#fff" /><circle cx="17" cy="17" r="6.100" fill="#4285f4" />
  </svg>
);

const Firefox = () => (
  <svg width="34" height="36" viewBox="0 0 34 36">
    <defs>
      <linearGradient id="ff1" x1=".8" y1="0" x2=".3" y2="1"><stop offset="0" stopColor="#fff44f" /><stop offset=".4" stopColor="#ff9a1f" /><stop offset=".75" stopColor="#ff3a4a" /><stop offset="1" stopColor="#e0128a" /></linearGradient>
      <radialGradient id="ff2"><stop offset="0" stopColor="#8a4bf0" /><stop offset="1" stopColor="#5b35b8" /></radialGradient>
    </defs>
    <path fill="url(#ff1)" d="M21 0c-4 2.500-5 6-4.800 9C13 9 9.500 7.500 8.500 6L7 8.500 5.500 3.500C3 6 2.500 8 2.200 10.500.8 13 0 16 0 18.500 0 28 7.500 35 17 35s17-7.300 17-16.500c0-4.500-1.300-8-3.500-10.500l.6 3.500C28 6 23 5 21 0z" />
    <circle cx="17" cy="18.500" r="7.800" fill="url(#ff2)" />
    <path fill="#ffa01e" d="M4 12c4-2 7-1 9 1.500 2 0 4 .2 4.500 1-1 1.500-3.500 2-4.500 2.500-1.500 1.500-2 3.500-1 6-4-1-7-5-8-11z" />
  </svg>
);

function Taskbar() {
  return (
    <footer className="flex h-[60px] shrink-0 bg-[#2b292a] text-white">
      <button type="button" aria-label="开始" className="flex w-[72px] shrink-0 items-center justify-center bg-[#383433]">
        <svg width="24" height="24" fill="#fff"><path d="M0 3.300L10 2v9.500H0zM11 1.800L24 0v11.500H11zM0 12.500h10V22L0 20.700zM11 12.500h13V24l-13-1.800z" /></svg>
      </button>
      <label className="flex w-[516px] shrink-0 items-center gap-[18px] border-2 border-[#bfbfbf] bg-[#f2f2f2] pl-4">
        <svg width="24" height="24" fill="none" stroke="#111" strokeWidth="1.700"><circle cx="15.500" cy="8.500" r="7.500" /><path d="M10 14L.5 23.500" /></svg>
        <input aria-label="搜索" placeholder="在这里输入你要搜索的内容" className="min-w-0 flex-1 text-[24px] text-black placeholder-[#222] outline-none" />
      </label>
      <button type="button" aria-label="Cortana" className="flex w-[72px] shrink-0 items-center justify-center">
        <svg width="24" height="24" fill="none" stroke="#fff" strokeWidth="2.600"><circle cx="12" cy="12" r="10.300" /></svg>
      </button>
      <button type="button" aria-label="任务视图" className="mr-[3px] flex w-[72px] shrink-0 items-center justify-center">
        <svg width="24" height="24" fill="none" stroke="#fff" strokeWidth="1.300"><path d="M.7 0v3.500h15V0M.7 24v-3.500h15V24M.7 7.500h15v9H.7zM22 0v6.500M22 11.500V24" /><path d="M20.500 7.500h3v3h-3z" fill="#fff" stroke="none" /></svg>
      </button>
      <TaskItem label="微信" line={2}><WeChat /></TaskItem>
      <TaskItem label="Edge"><Edge /></TaskItem>
      <TaskItem label="Word" line={1}><Word /></TaskItem>
      <TaskItem label="文件资源管理器"><Explorer /></TaskItem>
      <TaskItem label="截图工具"><Snip /></TaskItem>
      <TaskItem label="Chrome" line={1}><Chrome /></TaskItem>
      <TaskItem label="Firefox" line={1}><Firefox /></TaskItem>
      <button type="button" aria-label="Tableau" className="ml-0.5 flex w-[73px] items-center border-b-3 border-[#76b9ed] bg-[#484748]">
        <span className="flex h-full w-[67px] items-center justify-center border-r border-[#333] bg-[#595859] pt-[3px] pl-1">
          <span className="flex h-[34px] w-[34px] items-center justify-center bg-[#f3f3f3]"><TableauMark size={29} c={BLUE} /></span>
        </span>
      </button>
      <div className="ml-auto flex items-center">
        <button type="button" className="mr-5 flex items-center gap-[14px] text-[20px]">
          <svg width="31" height="29" viewBox="0 0 31 29">
            <defs><linearGradient id="sun" x1="0" y1="0" x2=".6" y2="1"><stop offset="0" stopColor="#ffe36b" /><stop offset="1" stopColor="#ff9a12" /></linearGradient></defs>
            <circle cx="14" cy="14.500" r="14" fill="url(#sun)" />
            <path fill="#c6e8fd" d="M15 22.500a4.500 4.500 0 0 1-.5-8.500 6 6 0 0 1 11-.8 4.800 4.800 0 0 1 1 9.300z" />
          </svg>
          27°C
        </button>
        <button type="button" aria-label="显示隐藏的图标" className="flex w-9 justify-center">
          <svg width="18" height="10" fill="none" stroke="#fff" strokeWidth="1.300"><path d="M.5 9.500L9 1l8.500 8.500" /></svg>
        </button>
        <button type="button" aria-label="网络" className="flex w-9 justify-center">
          <svg width="19" height="19" fill="none" stroke="#ddd" strokeWidth="1.300"><path d="M1 18.500C1 8.500 8 1.500 18.500 1.500M5.500 18.500c0-7 5-12 13-12M10 18.500c0-4.500 3-7.500 8.500-7.500M13.500 18.500c0-2 1.500-3.500 4-3.500" /><circle cx="17" cy="17" r="1.500" fill="#fff" stroke="none" /></svg>
        </button>
        <button type="button" aria-label="电池" className="flex w-9 justify-center">
          <svg width="25" height="18" fill="none" stroke="#fff" strokeWidth="1.300"><path d="M7 4h15.500v12.500H4V10M22.500 8h2v4M2.500 0v3M6 0v3M1 3.500h6.500v3.500c0 3-6.500 3-6.500 0z" /><path d="M8 6h9v8H6.500V10z" fill="#fff" stroke="none" /></svg>
        </button>
        <button type="button" aria-label="输入法" className="mr-0.5 w-9 pr-1 text-[20px] font-medium">中</button>
        <button type="button" className="w-[104px] pl-0.5 text-center text-[19px] leading-[28px]">
          <span className="block">16:41</span>
          <span className="block">2021/8/28</span>
        </button>
        <button type="button" aria-label="通知" className="mr-1.5 flex w-[72px] justify-center">
          <svg width="25" height="25" fill="none" stroke="#fff" strokeWidth="1.300"><path d="M.7.7h23.600v18h-7.300L12.500 24 8 18.700H.7z" /></svg>
        </button>
        <button type="button" aria-label="显示桌面" className="h-[60px] w-2 border-l-2 border-[#777]" />
      </div>
    </footer>
  );
}

function UploadWidget() {
  return (
    <button type="button" className="absolute top-[40px] right-[118px] flex h-[39px] w-[157px] items-stretch overflow-hidden rounded-[5px] border-2 border-[#2b9cfb] bg-[#22a0ff] text-[18px] text-[#6bbdfc]">
      <span className="flex w-[43px] items-center justify-center">
        <svg width="28" height="24" viewBox="0 0 30 26" fill="none" stroke="#fff" strokeWidth="3.800"><circle cx="15" cy="7.500" r="5.200" /><circle cx="7.500" cy="17.500" r="5.400" /><path d="M11.500 21L18.500 13.800a5.400 5.400 0 1 1 0 7.400" /></svg>
      </span>
      <span className="flex flex-1 items-center justify-center bg-linear-to-br from-[#e6f6ff] to-[#bfe8ff]">拖拽上传</span>
    </button>
  );
}

const LEVELS = ["#363b4a", "#363b4a", "#363b4a", "#363b4a", "#e08f55", "#e09a50", "#dfa64c", "#ddb04a", "#d8b94a", "#d3c04c", "#cbc54f", "#c0c955", "#b4cc5b", "#a8cd64", "#9bce6e", "#8dcf7a", "#80d088", "#73d096", "#68d0a2", "#5ed0ae", "#54cfb8", "#4ccfc0", "#46cfc6"];

function LevelMeter() {
  return (
    <div className="absolute top-[486px] right-0 flex h-[89px] w-[15px] flex-col items-center gap-px rounded-l-[4px] border border-r-0 border-[#353a48] bg-[#505668] pt-[10px]">
      {LEVELS.map((c, i) => <span key={i} className="h-0.5 w-[7px]" style={{ background: c }} />)}
    </div>
  );
}

export default function App() {
  return (
    <div className="relative flex min-h-screen flex-col overflow-hidden bg-[#f4f4f4] font-['Open_Sans','Noto_Sans_CJK_SC',sans-serif] leading-[27px]">
      <TitleBar />
      <Toolbar />
      <main className="flex flex-1">
        <DataPane />
        <Cards />
        <div className="flex min-w-0 flex-1 pb-2"><Workspace /></div>
      </main>
      <SheetTabs />
      <StatusBar />
      <Taskbar />
      <UploadWidget />
      <LevelMeter />
    </div>
  );
}
